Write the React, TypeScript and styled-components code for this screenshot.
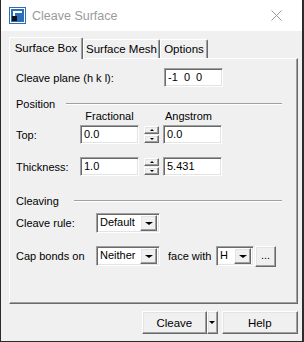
import React from 'react';
import styled, { createGlobalStyle, css } from 'styled-components';

const GlobalStyle = createGlobalStyle`
  html, body {
    margin: 0;
    padding: 0;
    background: #2f2e26;
  }
  body {
    width: 304px;
    height: 342px;
    overflow: hidden;
    font-family: 'Liberation Sans', Arial, sans-serif;
    font-size: 11px;
    color: #000;
  }
`;

const sunken = css`
  border: 1px solid;
  border-color: #a0a0a0 #ffffff #ffffff #a0a0a0;
  box-shadow: inset 1px 1px 0 #696969, inset -1px -1px 0 #e3e3e3;
`;

const raised = css`
  border: 1px solid;
  border-color: #ffffff #696969 #696969 #ffffff;
  box-shadow: inset -1px -1px 0 #a0a0a0, inset 1px 1px 0 #e3e3e3;
  background: #f0f0f0;
`;

const Window = styled.div`
  width: 301px;
  height: 341px;
  background: #f0f0f0;
  border-left: 1px solid #2b2b2b;
  border-right: 1px solid #2b2b2b;
  border-bottom: 1px solid #2b2b2b;
  display: flex;
  flex-direction: column;
`;

const TitleBar = styled.div`
  height: 31px;
  background: #ffffff;
  display: flex;
  align-items: center;
  padding-left: 8px;
  flex: none;
`;

const Title = styled.span`
  margin-left: 6px;
  font-size: 12.5px;
  color: #9a9a9a;
  flex: 1;
`;

const CloseBox = styled.div`
  width: 46px;
  height: 31px;
  display: flex;
  align-items: center;
  justify-content: center;
  margin-right: 3px;
`;

const Body = styled.div`
  flex: 1;
  display: flex;
  flex-direction: column;
  padding: 6px 4px 0 8px;
`;

const TabRow = styled.div`
  display: flex;
  align-items: flex-end;
  height: 21px;
  padding-left: 0;
`;

const Tab = styled.div<{ $active?: boolean; $w: number }>`
  width: ${p => p.$w}px;
  box-sizing: border-box;
  height: ${p => (p.$active ? 22 : 19)}px;
  border-top: 1px solid #ffffff;
  border-left: 1px solid #ffffff;
  border-right: 1px solid #696969;
  box-shadow: inset -1px 0 0 #a0a0a0;
  border-radius: 2px 2px 0 0;
  background: #f0f0f0;
  display: flex;
  align-items: ${p => (p.$active ? 'flex-start' : 'center')};
  padding-top: ${p => (p.$active ? 4 : 0)}px;
  justify-content: center;
  font-size: 11.5px;
  position: relative;
  margin-bottom: ${p => (p.$active ? -1 : 0)}px;
  z-index: ${p => (p.$active ? 2 : 1)};
`;

const Panel = styled.div`
  height: 246px;
  box-sizing: border-box;
  border-top: 1px solid #ffffff;
  border-left: 1px solid #ffffff;
  border-right: 1px solid #696969;
  border-bottom: 1px solid #696969;
  box-shadow: inset -1px -1px 0 #a0a0a0;
  padding: 9px 0 0 6px;
  display: flex;
  flex-direction: column;
`;

const Row = styled.div<{ $mt?: number; $h?: number }>`
  display: flex;
  align-items: center;
  margin-top: ${p => p.$mt ?? 0}px;
  height: ${p => p.$h ?? 19}px;
  flex: none;
`;

const Label = styled.span<{ $w?: number }>`
  width: ${p => p.$w ?? 64}px;
  flex: none;
  white-space: nowrap;
`;

const GroupHeader = styled.div<{ $mt: number; $gap: number }>`
  display: flex;
  align-items: center;
  margin-top: ${p => p.$mt}px;
  height: 14px;
  padding-right: 15px;
  & > span {
    margin-right: ${p => p.$gap}px;
  }
`;

const Etch = styled.div`
  flex: 1;
  height: 1px;
  background: #a0a0a0;
  border-bottom: 1px solid #ffffff;
`;

const ColHead = styled.div<{ $w: number; $ml: number }>`
  width: ${p => p.$w}px;
  margin-left: ${p => p.$ml}px;
  text-align: center;
  line-height: 10px;
`;

const Field = styled.div<{ $w?: number; $ml?: number }>`
  ${sunken};
  box-sizing: border-box;
  width: ${p => p.$w ?? 59}px;
  height: 19px;
  margin-left: ${p => p.$ml ?? 0}px;
  background: #ffffff;
  padding: 2px 0 0 3px;
  white-space: pre;
  flex: none;
`;

const Spinner = styled.div`
  width: 15px;
  height: 17px;
  margin-left: 5px;
  display: flex;
  flex-direction: column;
  gap: 1px;
  flex: none;
`;

const SpinBtn = styled.div`
  ${raised};
  box-sizing: border-box;
  height: 8px;
  display: flex;
  align-items: center;
  justify-content: center;
`;

const Arrow = styled.span<{ $dir: 'up' | 'down'; $size?: number }>`
  width: 0;
  height: 0;
  border-left: ${p => p.$size ?? 2}px solid transparent;
  border-right: ${p => p.$size ?? 2}px solid transparent;
  ${p =>
    p.$dir === 'up'
      ? `border-bottom: ${Math.ceil((p.$size ?? 2) / 2) + 1}px solid #000;`
      : `border-top: ${Math.ceil((p.$size ?? 2) / 2) + 1}px solid #000;`}
`;

const Select = styled.div<{ $w: number; $ml?: number }>`
  ${sunken};
  box-sizing: border-box;
  width: ${p => p.$w}px;
  height: 20px;
  margin-left: ${p => p.$ml ?? 0}px;
  background: #ffffff;
  display: flex;
  padding: 2px;
  flex: none;
`;

const SelectText = styled.span`
  flex: 1;
  padding-left: 1px;
  line-height: 13px;
`;

const SelectBtn = styled.div`
  ${raised};
  box-sizing: border-box;
  width: 17px;
  height: 16px;
  margin-top: -1px;
  display: flex;
  align-items: center;
  justify-content: center;
`;

const SmallButton = styled.div<{ $ml: number }>`
  ${raised};
  box-sizing: border-box;
  width: 21px;
  height: 21px;
  margin-left: ${p => p.$ml}px;
  display: flex;
  align-items: center;
  justify-content: center;
  padding-bottom: 2px;
`;

const Footer = styled.div`
  display: flex;
  margin-top: 7px;
  height: 23px;
  padding-left: 133px;
`;

const Button = styled.div<{ $w: number; $ml?: number }>`
  ${raised};
  box-sizing: border-box;
  width: ${p => p.$w}px;
  height: 23px;
  margin-left: ${p => p.$ml ?? 0}px;
  display: flex;
  align-items: center;
  justify-content: center;
  font-size: 11.5px;
`;

const AppIcon = () => (
  <svg width="17" height="17" viewBox="0 0 17 17">
    <rect x="0.5" y="0.5" width="16" height="16" fill="#ffffff" stroke="#2a6fb8" />
    <rect x="2" y="2" width="13" height="13" fill="#2a6fb8" />
    <rect x="4" y="4" width="9" height="9" fill="#ffffff" />
    <rect x="6" y="6" width="7" height="7" fill="#2a6fb8" />
    <rect x="3" y="9" width="5" height="5" fill="#111111" />
  </svg>
);

const CloseIcon = () => (
  <svg width="11" height="11" viewBox="0 0 11 11">
    <path d="M0.5 0.5 L10.5 10.5 M10.5 0.5 L0.5 10.5" stroke="#9a9a9a" strokeWidth="1" />
  </svg>
);

const SpinPair = () => (
  <Spinner>
    <SpinBtn>
      <Arrow $dir="up" $size={2} />
    </SpinBtn>
    <SpinBtn>
      <Arrow $dir="down" $size={2} />
    </SpinBtn>
  </Spinner>
);

const Combo = ({ w, ml, value }: { w: number; ml?: number; value: string }) => (
  <Select $w={w} $ml={ml}>
    <SelectText>{value}</SelectText>
    <SelectBtn>
      <Arrow $dir="down" $size={4} />
    </SelectBtn>
  </Select>
);

export default function App() {
  return (
    <>
      <GlobalStyle />
      <Window>
        <TitleBar>
          <AppIcon />
          <Title>Cleave Surface</Title>
          <CloseBox>
            <CloseIcon />
          </CloseBox>
        </TitleBar>
        <Body>
          <TabRow>
            <Tab $active $w={74}>Surface Box</Tab>
            <Tab $w={77}>Surface Mesh</Tab>
            <Tab $w={48}>Options</Tab>
          </TabRow>
          <Panel>
            <Row>
              <Label $w={148}>Cleave plane (h k l):</Label>
              <Field>-1  0  0</Field>
            </Row>

            <GroupHeader $mt={10} $gap={11}>
              <span>Position</span>
              <Etch />
            </GroupHeader>
            <Row $h={10}>
              <ColHead $w={59} $ml={64}>Fractional</ColHead>
              <ColHead $w={59} $ml={20}>Angstrom</ColHead>
            </Row>
            <Row $mt={4}>
              <Label>Top:</Label>
              <Field>0.0</Field>
              <SpinPair />
              <Field $ml={4}>0.0</Field>
            </Row>
            <Row $mt={13}>
              <Label>Thickness:</Label>
              <Field>1.0</Field>
              <SpinPair />
              <Field $ml={4}>5.431</Field>
            </Row>

            <GroupHeader $mt={18} $gap={15}>
              <span>Cleaving</span>
              <Etch />
            </GroupHeader>
            <Row $mt={5} $h={20}>
              <Label $w={80}>Cleave rule:</Label>
              <Combo w={64} value="Default" />
            </Row>
            <Row $mt={13} $h={20}>
              <Label $w={80}>Cap bonds on</Label>
              <Combo w={64} value="Neither" />
              <Label $w={48} style={{ marginLeft: 8 }}>face with</Label>
              <Combo w={38} value="H" />
              <SmallButton $ml={1}>...</SmallButton>
            </Row>
          </Panel>
          <Footer>
            <Button $w={65}>Cleave</Button>
            <Button $w={11}>
              <Arrow $dir="down" $size={3} />
            </Button>
            <Button $w={77} $ml={4}>Help</Button>
          </Footer>
        </Body>
      </Window>
    </>
  );
}
